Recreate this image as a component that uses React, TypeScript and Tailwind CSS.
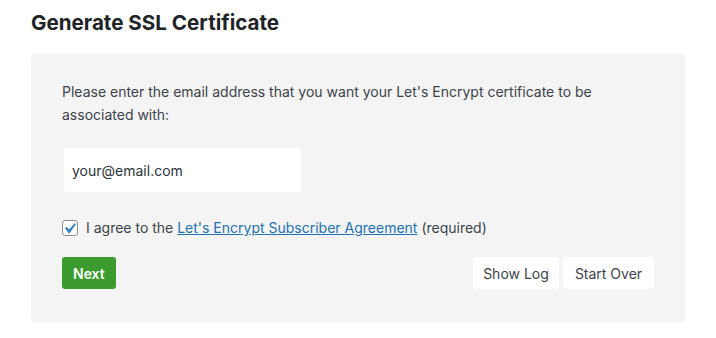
export default function App() {
  return (
    <div className="min-h-[338px] bg-white px-[31px] pt-[10px] font-['Inter',sans-serif] text-[#3c434a]">
      <h1 className="text-[20.6px] font-bold leading-[26px] text-[#1d2327]">
        Generate SSL Certificate
      </h1>

      <div className="mt-[18px] w-[654px] rounded-[4px] bg-[#f4f4f4] px-[31px] pt-[26px] pb-[33px]">
        <p className="text-[14px] leading-[23px] text-[#3c434a]">
          Please enter the email address that you want your Let's Encrypt certificate to be
          associated with:
        </p>

        <div className="mt-[22px] ml-[2px] flex h-[44px] w-[237px] items-center rounded-[3px] bg-white px-[8px] text-[14px] text-[#2c3338]">
          your@email.com
        </div>

        <label className="mt-[25px] flex items-center gap-[8px] text-[14px] text-[#3c434a]">
          <span className="relative h-[16px] w-[16px] shrink-0 rounded-[3px] border border-[#8c8f94] bg-white">
            <svg viewBox="0 0 20 20" className="absolute top-[-3px] left-[-4px] h-[21px] w-[21px]">
              <path d="M14.83 4.89l1.34.94-5.81 8.38H9.02L5.78 9.67l1.34-1.25 2.57 2.4z" fill="#3582c4" />
            </svg>
          </span>
          <span>
            I agree to the{" "}
            <a href="#" className="text-[#2271b1] underline">
              Let's Encrypt Subscriber Agreement
            </a>{" "}
            (required)
          </span>
        </label>

        <div className="mt-[19px] flex items-center justify-between">
          <button className="h-[32px] rounded-[3px] bg-[#3c9b2f] px-[11px] text-[14px] font-semibold text-white">
            Next
          </button>
          <div className="flex gap-[4px]">
            <button className="h-[32px] w-[86px] rounded-[3px] bg-white text-[14px] text-[#3c434a]">
              Show Log
            </button>
            <button className="h-[32px] w-[91px] rounded-[3px] bg-white text-[14px] text-[#3c434a]">
              Start Over
            </button>
          </div>
        </div>
      </div>
    </div>
  );
}
